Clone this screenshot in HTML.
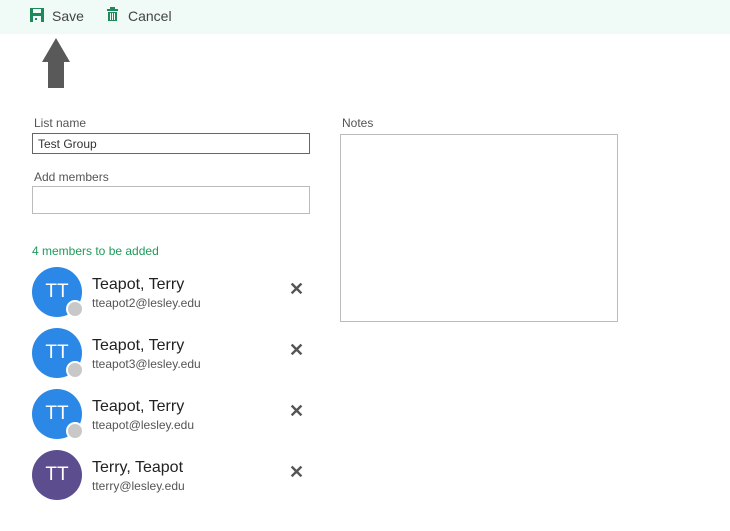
<!DOCTYPE html><html><head><style>
body{margin:0;width:730px;height:531px;background:#fff;font-family:"Liberation Sans",sans-serif;position:relative;overflow:hidden;color:#333}
.hdr{position:absolute;left:0;top:0;width:730px;height:34px;background:#f0faf6}
.t{position:absolute;white-space:nowrap}
.lbl{font-size:12px;color:#555}
.box{position:absolute;border:1px solid #bbb;box-sizing:border-box}
.av{position:absolute;left:32px;width:50px;height:50px;border-radius:50%;color:#fff;font-size:19px;text-align:center;line-height:50px}
.dot{position:absolute;left:66px;width:14px;height:14px;border-radius:50%;background:#c8c8c8;border:2px solid #fff}
.nm{position:absolute;left:92px;font-size:16px;color:#222}
.em{position:absolute;left:92px;font-size:12px;color:#555}
.x{position:absolute;left:289px;font-size:18px;color:#555;font-weight:bold}
</style></head><body>
<div class="hdr"></div>
<svg style="position:absolute;left:30px;top:8px" width="14" height="14" viewBox="0 0 14 14"><rect width="14" height="14" fill="#1e8a5a"/><rect x="3" y="1" width="8" height="4" fill="#f0faf6"/><rect x="3" y="8" width="8" height="6" fill="#f0faf6"/><rect x="5" y="10" width="2" height="2" fill="#1e8a5a"/></svg>
<div class="t" style="left:52px;top:8px;font-size:14px;color:#444">Save</div>
<svg style="position:absolute;left:107px;top:7px" width="11" height="14" viewBox="0 0 11 14"><rect x="3" y="0" width="5" height="2" fill="#1e8a5a"/><rect x="0" y="2" width="11" height="2" fill="#1e8a5a"/><rect x="1" y="5" width="9" height="9" fill="#1e8a5a"/><rect x="3" y="6" width="1" height="7" fill="#f0faf6"/><rect x="5" y="6" width="1" height="7" fill="#f0faf6"/><rect x="7" y="6" width="1" height="7" fill="#f0faf6"/></svg>
<div class="t" style="left:128px;top:8px;font-size:14px;color:#444">Cancel</div>
<svg style="position:absolute;left:41px;top:38px" width="30" height="51"><polygon points="15,0 29,24 23,24 23,50 7,50 7,24 1,24" fill="#595959"/></svg>
<div class="t lbl" style="left:34px;top:116px">List name</div>
<div class="box" style="left:32px;top:133px;width:278px;height:21px;border-color:#666"></div>
<div class="t" style="left:38px;top:137px;font-size:12px;color:#333">Test Group</div>
<div class="t lbl" style="left:34px;top:170px">Add members</div>
<div class="box" style="left:32px;top:186px;width:278px;height:28px"></div>
<div class="t lbl" style="left:342px;top:116px">Notes</div>
<div class="box" style="left:340px;top:134px;width:278px;height:188px"></div>
<div class="t" style="left:32px;top:244px;font-size:12px;color:#1e9a5a">4 members to be added</div>

<div class="av" style="top:267px;background:#2b88e6">TT</div><div class="dot" style="top:300px"></div>
<div class="nm" style="top:276px">Teapot, Terry</div><div class="em" style="top:296px">tteapot2@lesley.edu</div><div class="x" style="top:279px">✕</div>

<div class="av" style="top:328px;background:#2b88e6">TT</div><div class="dot" style="top:361px"></div>
<div class="nm" style="top:337px">Teapot, Terry</div><div class="em" style="top:357px">tteapot3@lesley.edu</div><div class="x" style="top:340px">✕</div>

<div class="av" style="top:389px;background:#2b88e6">TT</div><div class="dot" style="top:422px"></div>
<div class="nm" style="top:398px">Teapot, Terry</div><div class="em" style="top:418px">tteapot@lesley.edu</div><div class="x" style="top:401px">✕</div>

<div class="av" style="top:450px;background:#5c4d8f">TT</div>
<div class="nm" style="top:459px">Terry, Teapot</div><div class="em" style="top:479px">tterry@lesley.edu</div><div class="x" style="top:462px">✕</div>
</body></html>
